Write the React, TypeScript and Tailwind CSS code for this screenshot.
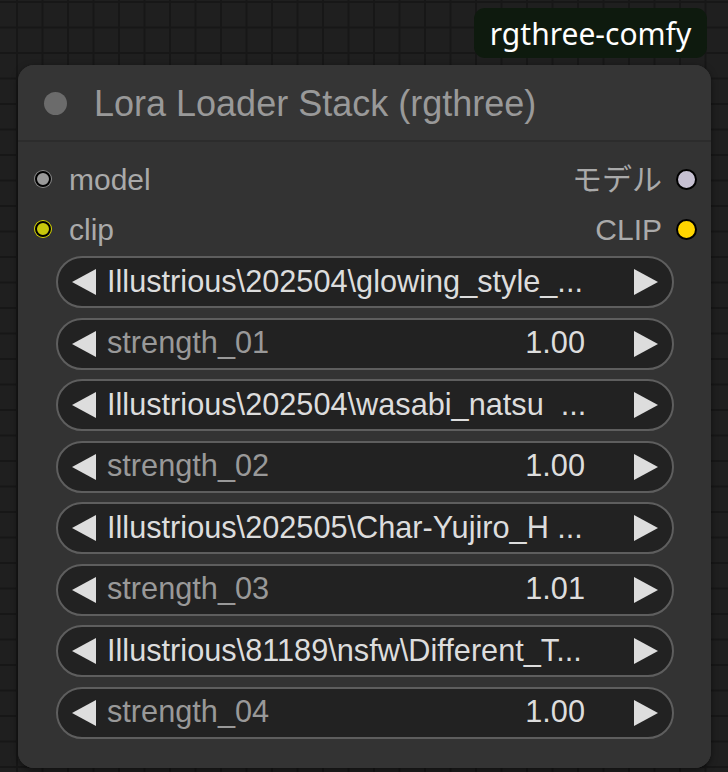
import React from 'react';

const SANS = "font-['Liberation_Sans','Noto_Sans_CJK_JP',sans-serif]";

type Widget = { kind: 'combo' | 'number'; label: string; value?: string };

const widgets: Widget[] = [
  { kind: 'combo', label: 'Illustrious\\202504\\glowing_style_...' },
  { kind: 'number', label: 'strength_01', value: '1.00' },
  { kind: 'combo', label: 'Illustrious\\202504\\wasabi_natsu  ...' },
  { kind: 'number', label: 'strength_02', value: '1.00' },
  { kind: 'combo', label: 'Illustrious\\202505\\Char-Yujiro_H ...' },
  { kind: 'number', label: 'strength_03', value: '1.01' },
  { kind: 'combo', label: 'Illustrious\\81189\\nsfw\\Different_T...' },
  { kind: 'number', label: 'strength_04', value: '1.00' },
];

function Arrow({ dir }: { dir: 'left' | 'right' }) {
  return (
    <svg width="24" height="26" viewBox="0 0 24 26" className="shrink-0">
      {dir === 'left' ? (
        <polygon points="24,0 24,26 0,13" fill="#dddddd" />
      ) : (
        <polygon points="0,0 0,26 24,13" fill="#dddddd" />
      )}
    </svg>
  );
}

function WidgetRow({ w }: { w: Widget }) {
  return (
    <div className="flex h-[52px] items-center rounded-full border-2 border-[#5e5e5e] bg-[#222222] pl-[14px] pr-[14px]">
      <Arrow dir="left" />
      {w.kind === 'combo' ? (
        <div className="ml-[11px] min-w-0 flex-1 whitespace-pre text-[30.7px] text-[#dddddd]">{w.label}</div>
      ) : (
        <>
          <div className="ml-[11px] flex-1 text-[30.7px] text-[#999999]">{w.label}</div>
          <div className="text-[30.7px] text-[#dddddd]">{w.value}</div>
        </>
      )}
      <div className="w-[49px] shrink-0" />
      <Arrow dir="right" />
    </div>
  );
}

export default function App() {
  return (
    <div
      className={`relative h-[772px] w-[728px] overflow-hidden bg-[#1f1f1f] bg-[linear-gradient(to_right,#171717_2px,transparent_2px),linear-gradient(to_bottom,#171717_2px,transparent_2px)] bg-[size:25.5px_25.5px] bg-[position:16px_1px] ${SANS}`}
    >
      {/* badge */}
      <div className="absolute left-[474px] top-[8px] flex h-[50px] w-[233px] items-center justify-center rounded-[11px] bg-[#0e1a0e] font-['Noto_Sans',sans-serif] text-[30px] text-white">
        rgthree-comfy
      </div>

      {/* node */}
      <div className="absolute left-[18px] top-[65px] flex h-[703px] w-[693px] flex-col overflow-hidden rounded-[16px] bg-[#353535] shadow-[0_2px_6px_rgba(0,0,0,0.5)]">
        <div className="flex h-[77px] shrink-0 items-center border-b-2 border-[#2c2c2c] bg-[#353535] pl-[26px] pt-[2px]">
          <div className="h-[23px] w-[23px] rounded-full bg-[#6b6b6b]" />
          <div className="ml-[27px] text-[36px] text-[#999999]">Lora Loader Stack (rgthree)</div>
        </div>

        <div className="flex flex-1 flex-col bg-[#333333] pt-[12px]">
          <div className="flex h-[50px] items-center pl-[17px] pr-[14px]">
            <div className="h-[16px] w-[16px] rounded-full border-2 border-black bg-[#999999] shadow-[0_0_0_1px_#888]" />
            <div className="ml-[18px] text-[30px] text-[#aaaaaa]">model</div>
            <div className="flex-1" />
            <div className="text-[30px] text-[#aaaaaa]">モデル</div>
            <div className="ml-[14px] h-[21px] w-[21px] rounded-full border-2 border-black bg-[#c6c0d2]" />
          </div>
          <div className="flex h-[50px] items-center pl-[17px] pr-[14px]">
            <div className="h-[16px] w-[16px] rounded-full border-2 border-black bg-[#c8c80c] shadow-[0_0_0_1px_#d4d400]" />
            <div className="ml-[18px] text-[30px] text-[#aaaaaa]">clip</div>
            <div className="flex-1" />
            <div className="text-[30px] text-[#aaaaaa]">CLIP</div>
            <div className="ml-[14px] h-[21px] w-[21px] rounded-full border-2 border-black bg-[#ffd500]" />
          </div>

          <div className="mt-[2px] flex flex-col gap-[9.5px] pl-[38px] pr-[37px]">
            {widgets.map((w, i) => (
              <WidgetRow key={i} w={w} />
            ))}
          </div>
        </div>
      </div>
    </div>
  );
}
